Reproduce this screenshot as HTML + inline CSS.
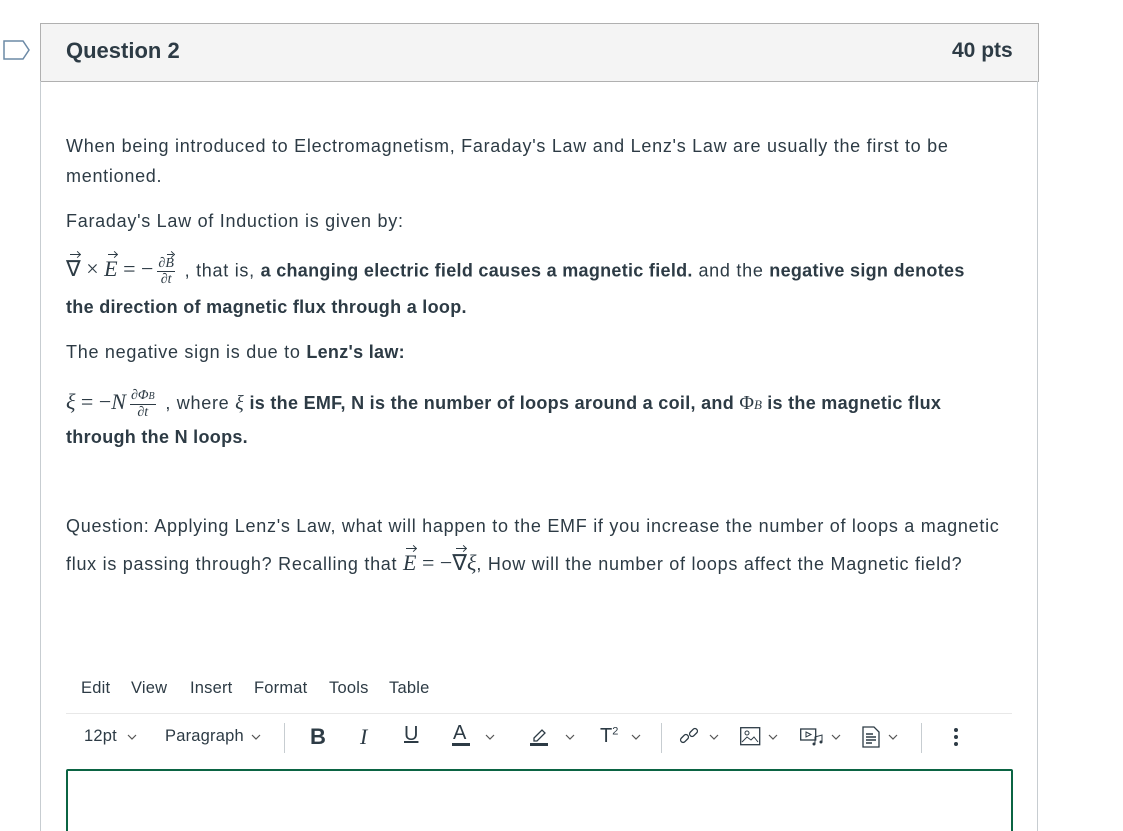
<!DOCTYPE html>
<html><head><meta charset="utf-8"><style>
html,body{margin:0;width:1123px;height:831px;overflow:hidden}
body{background:#fff;font-family:"Liberation Sans",sans-serif;color:#2d3b45;position:relative}
.a{position:absolute;white-space:nowrap}
.t{font-size:18px;letter-spacing:0.72px}
b{font-weight:bold;letter-spacing:0.3px}
.m{font-family:"Liberation Serif",serif;font-style:italic;letter-spacing:0}
.mr{font-family:"Liberation Serif",serif;letter-spacing:0}
.frac{display:inline-block;vertical-align:middle;text-align:center;font-size:14px;line-height:15px;margin:0 4px;letter-spacing:0}
.frac>span{display:block}
.frac .n{border-bottom:1px solid #2d3b45;padding:0 1px}
.vec{position:relative;display:inline-block}
.vec:before{content:"";position:absolute;left:25%;right:5%;top:-2px;border-top:1.2px solid #2d3b45}
.vec:after{content:"";position:absolute;right:4%;top:-4.5px;width:4px;height:4px;border-top:1.2px solid #2d3b45;border-right:1.2px solid #2d3b45;transform:rotate(45deg)}
.menu{font-size:16.5px;letter-spacing:0.2px}
</style></head><body>
<svg class="a" style="left:3px;top:40px" width="28" height="20"><path d="M1 1H20L26 10L20 19H1Z" fill="none" stroke="#6c8aa6" stroke-width="1.5"/></svg>
<div class="a" style="left:40px;top:23px;width:997px;height:57px;background:#f4f4f4;border:1px solid #b0b0b0"></div>
<div class="a" style="left:40px;top:81px;height:760px;border-left:1px solid #c7cdd1"></div>
<div class="a" style="left:1037px;top:81px;height:760px;border-left:1px solid #c7cdd1"></div>
<div class="a" style="left:66px;top:38px;font-size:22px;font-weight:bold">Question 2</div>
<div class="a" style="left:952px;top:39px;font-size:21px;font-weight:bold">40 pts</div>

<div class="a t" style="left:66px;top:136px">When being introduced to Electromagnetism, Faraday's Law and Lenz's Law are usually the first to be</div>
<div class="a t" style="left:66px;top:166px">mentioned.</div>
<div class="a t" style="left:66px;top:211px">Faraday's Law of Induction is given by:</div>
<div class="a t" style="left:66px;top:256px"><span class="mr" style="font-size:22px"><span class="vec">∇</span> × <i class="vec">E</i> = −</span><span class="frac"><span class="n m">∂<span class="vec">B</span></span><span class="m">∂t</span></span> , that is, <b>a changing electric field causes a magnetic field.</b> and the <b>negative sign denotes</b></div>
<div class="a t" style="left:66px;top:297px"><b>the direction of magnetic flux through a loop.</b></div>
<div class="a t" style="left:66px;top:342px">The negative sign is due to <b>Lenz's law:</b></div>
<div class="a t" style="left:66px;top:388px"><span class="mr" style="font-size:22px"><i>ξ</i> = −<i>N</i></span><span class="frac"><span class="n m">∂Φ<span style="font-size:10px">B</span></span><span class="m">∂t</span></span> , where <span class="m" style="font-size:20px">ξ</span> <b>is the EMF, N is the number of loops around a coil, and <span class="mr" style="font-weight:normal;font-size:20px">Φ<i style="font-size:13px">B</i></span> is the magnetic flux</b></div>
<div class="a t" style="left:66px;top:427px"><b>through the N loops.</b></div>
<div class="a t" style="left:66px;top:516px">Question: Applying Lenz's Law, what will happen to the EMF if you increase the number of loops a magnetic</div>
<div class="a t" style="left:66px;top:550px">flux is passing through? Recalling that <span class="mr" style="font-size:22px"><i class="vec">E</i> = −<span class="vec">∇</span><i>ξ</i></span>, How will the number of loops affect the Magnetic field?</div>

<div class="a menu" style="left:81px;top:679px">Edit</div>
<div class="a menu" style="left:131px;top:679px">View</div>
<div class="a menu" style="left:190px;top:679px">Insert</div>
<div class="a menu" style="left:254px;top:679px">Format</div>
<div class="a menu" style="left:329px;top:679px">Tools</div>
<div class="a menu" style="left:389px;top:679px">Table</div>
<div class="a" style="left:66px;top:713px;width:946px;border-top:1px solid #e8e8e8"></div>

<div class="a menu" style="left:84px;top:727px">12pt</div>
<div class="a menu" style="left:165px;top:727px">Paragraph</div>
<svg class="a" style="left:0;top:0" width="1123" height="831">
<g fill="none" stroke="#555" stroke-width="1.2">
<path d="M128 735l4 4 4-4"/><path d="M252 735l4 4 4-4"/><path d="M486 735l4 4 4-4"/><path d="M566 735l4 4 4-4"/><path d="M632 735l4 4 4-4"/><path d="M710 735l4 4 4-4"/><path d="M769 735l4 4 4-4"/><path d="M832 735l4 4 4-4"/><path d="M889 735l4 4 4-4"/>
</g>
<g stroke="#c7cdd1"><path d="M284.5 723v30M661.5 723v30M921.5 723v30"/></g>
</svg>
<div class="a" style="left:310px;top:724px;font-size:22px;font-weight:bold">B</div>
<div class="a mr" style="left:360px;top:724px;font-size:22px;font-style:italic">I</div>
<div class="a" style="left:404px;top:723px;font-size:20px;text-decoration:underline">U</div>
<div class="a" style="left:453px;top:722px;font-size:20px">A</div>
<div class="a" style="left:452px;top:743px;width:18px;height:3px;background:#2d3b45"></div>
<svg class="a" style="left:530px;top:726px" width="20" height="20"><path d="M4 12L12 4L15 7L7 15H4Z" fill="none" stroke="#2d3b45" stroke-width="1.3"/><rect x="0" y="17" width="18" height="3" fill="#2d3b45"/></svg>
<div class="a" style="left:600px;top:725px;font-size:20px">T<sup style="font-size:11px">2</sup></div>
<svg class="a" style="left:679px;top:726px" width="22" height="22"><g fill="none" stroke="#2d3b45" stroke-width="1.3"><rect x="1" y="10" width="9" height="5" rx="2.5" transform="rotate(-45 5.5 12.5)"/><rect x="10" y="4" width="9" height="5" rx="2.5" transform="rotate(-45 14.5 6.5)"/></g></svg>
<svg class="a" style="left:740px;top:727px" width="21" height="19"><rect x="0.7" y="0.7" width="19" height="17" fill="none" stroke="#2d3b45" stroke-width="1.3"/><circle cx="7" cy="6" r="2" fill="none" stroke="#2d3b45"/><path d="M2 15L7 10L11 13L14 10L18 15" fill="none" stroke="#2d3b45"/></svg>
<svg class="a" style="left:800px;top:727px" width="24" height="20"><rect x="0.7" y="2" width="15" height="11" fill="none" stroke="#2d3b45" stroke-width="1.3"/><path d="M6 5L11 7.5L6 10Z" fill="none" stroke="#2d3b45"/><path d="M15 17V10L22 8V15" fill="none" stroke="#2d3b45"/><circle cx="14" cy="17" r="1.5" fill="#2d3b45"/><circle cx="21" cy="15" r="1.5" fill="#2d3b45"/></svg>
<svg class="a" style="left:862px;top:726px" width="18" height="22"><path d="M1 1H12L17 6V21H1Z" fill="none" stroke="#2d3b45" stroke-width="1.3"/><path d="M4 8H11M4 11H14M4 14H14M4 17H10" stroke="#2d3b45" stroke-width="1.5"/></svg>
<svg class="a" style="left:953px;top:727px" width="6" height="22"><circle cx="3" cy="3" r="2" fill="#2d3b45"/><circle cx="3" cy="10" r="2" fill="#2d3b45"/><circle cx="3" cy="17" r="2" fill="#2d3b45"/></svg>

<div class="a" style="left:66px;top:769px;width:943px;height:80px;border:2px solid #0b6443;border-radius:2px"></div>
</body></html>
